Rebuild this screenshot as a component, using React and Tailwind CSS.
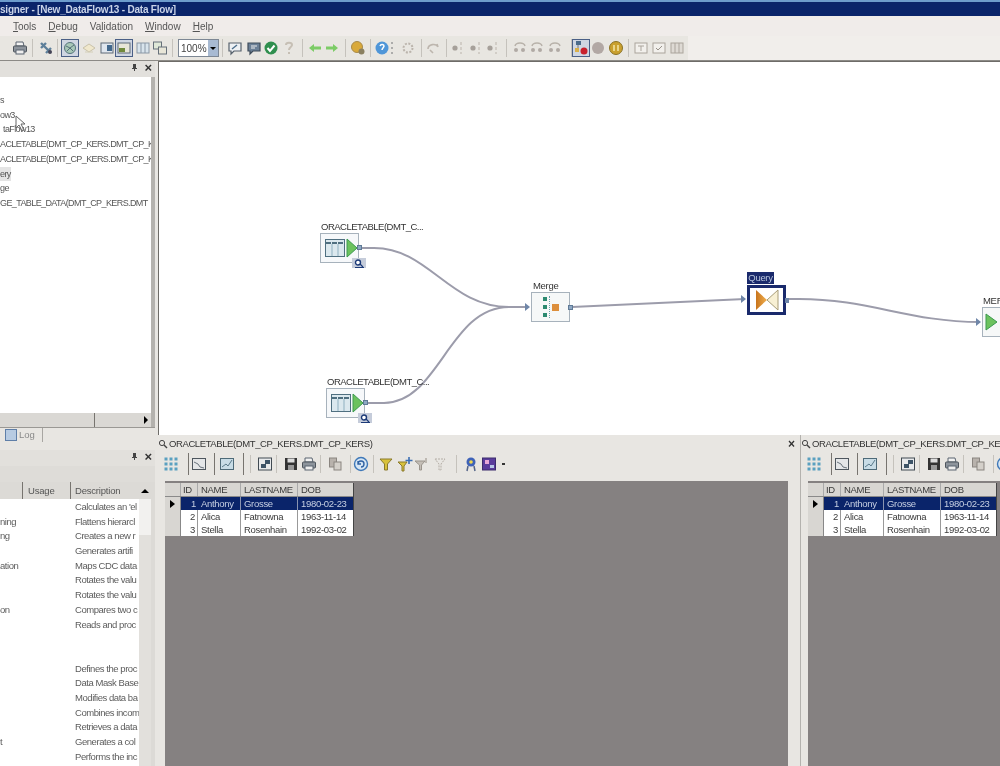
import React from "react";

// small toolbar glyphs, all on a 16x16 box
function Glyph({ kind }) {
  const s = { width: 16, height: 16, viewBox: "0 0 16 16" };
  if (kind === "print")
    return (
      <svg {...s}>
        <path d="M4 2h7l1 4H4z" fill="#f2f2f2" stroke="#5a6470" />
        <rect x="1.5" y="6" width="13" height="6" rx="1" fill="#8d949c" stroke="#4d545c" />
        <rect x="4" y="10" width="8" height="4" fill="#eee" stroke="#5a6470" />
      </svg>
    );
  if (kind === "tools")
    return (
      <svg {...s}>
        <path d="M3 3l9 9M3 8l5-5M8 13l5-5" stroke="#5d7f9a" strokeWidth="2.4" fill="none" />
        <circle cx="12" cy="12" r="2" fill="#445" />
      </svg>
    );
  if (kind === "globe")
    return (
      <svg {...s}>
        <circle cx="8" cy="8" r="5.5" fill="#a8c8b8" stroke="#56747c" />
        <path d="M4 6l4 2 4-3M5 11l3-3 3 3" stroke="#55707a" fill="none" />
      </svg>
    );
  if (kind === "cloud")
    return (
      <svg {...s}>
        <path d="M2 8l6-4 6 4-6 4z" fill="#f0e8cc" stroke="#c9c2aa" />
        <path d="M4 12h8" stroke="#d4cfb8" />
      </svg>
    );
  if (kind === "panelA")
    return (
      <svg {...s}>
        <rect x="2" y="3" width="12" height="10" fill="#dfe6ee" stroke="#5f6b78" />
        <rect x="8" y="5" width="5" height="6" fill="#42688c" />
      </svg>
    );
  if (kind === "panelB")
    return (
      <svg {...s}>
        <rect x="2" y="3" width="12" height="10" fill="#e8e6d8" stroke="#5f6b78" />
        <rect x="3" y="8" width="6" height="4" fill="#708a3c" />
      </svg>
    );
  if (kind === "panelC")
    return (
      <svg {...s}>
        <rect x="2" y="3" width="12" height="10" fill="#d8e4ec" stroke="#8a98a6" />
        <path d="M6 3v10M10 3v10" stroke="#8a98a6" />
      </svg>
    );
  if (kind === "panelD")
    return (
      <svg {...s}>
        <rect x="1.5" y="2" width="8" height="7" fill="#dfe8d8" stroke="#66707a" />
        <rect x="6.5" y="7" width="8" height="7" fill="#e8e6d8" stroke="#66707a" />
      </svg>
    );
  if (kind === "note")
    return (
      <svg {...s}>
        <path d="M2 3h12v8H7l-3 3v-3H2z" fill="#eef1f4" stroke="#56616c" strokeWidth="1.2" />
        <path d="M5 9l5-4" stroke="#4d6f8c" strokeWidth="1.5" />
      </svg>
    );
  if (kind === "note2")
    return (
      <svg {...s}>
        <path d="M2 3h12v8H7l-3 3v-3H2z" fill="#6b8096" stroke="#3f4c5a" strokeWidth="1.2" />
        <path d="M5 6h6M5 8h4" stroke="#eee" />
      </svg>
    );
  if (kind === "check")
    return (
      <svg {...s}>
        <circle cx="8" cy="8" r="6.5" fill="#2f8f4e" />
        <path d="M4.5 8l2.5 3 4.5-5.5" stroke="#fff" strokeWidth="2" fill="none" />
      </svg>
    );
  if (kind === "help")
    return (
      <svg {...s}>
        <path d="M5 5c0-3 6-3 6 0 0 2-3 2-3 5M8 12v2" stroke="#c6bfb4" strokeWidth="2" fill="none" />
      </svg>
    );
  if (kind === "left")
    return (
      <svg {...s}>
        <path d="M2 8l5-4v2.5h7v3H7V12z" fill="#7ccc66" />
      </svg>
    );
  if (kind === "right")
    return (
      <svg {...s}>
        <path d="M14 8L9 4v2.5H2v3h7V12z" fill="#7ccc66" />
      </svg>
    );
  if (kind === "coin")
    return (
      <svg {...s}>
        <circle cx="7" cy="7" r="5.5" fill="#d9a93a" stroke="#a88a4a" />
        <circle cx="11.5" cy="11.5" r="3" fill="#8a8060" />
      </svg>
    );
  if (kind === "about")
    return (
      <svg {...s}>
        <circle cx="8" cy="8" r="6.5" fill="#4f96d8" />
        <path d="M6 6c1-2.5 4-1.5 4 0S8 8 8 10" stroke="#fff" strokeWidth="1.5" fill="none" />
      </svg>
    );
  if (kind === "dots")
    return (
      <svg {...s}>
        <circle cx="4" cy="3" r="1" fill="#999" />
        <circle cx="4" cy="8" r="1" fill="#999" />
        <circle cx="4" cy="13" r="1" fill="#999" />
      </svg>
    );
  if (kind === "gear")
    return (
      <svg {...s}>
        <circle cx="8" cy="8" r="4.5" fill="none" stroke="#bbb4ac" strokeWidth="2" strokeDasharray="2 1.5" />
      </svg>
    );
  if (kind === "loop")
    return (
      <svg {...s}>
        <path d="M3 9c0-5 8-6 10-2M13 7l-1-3M8 13l-3-3" stroke="#bdb6ae" strokeWidth="1.6" fill="none" />
      </svg>
    );
  if (kind === "step")
    return (
      <svg {...s}>
        <circle cx="6" cy="8" r="2.6" fill="#a6a09a" />
        <path d="M12 2v3M12 7v3M12 12v2" stroke="#bbb4ac" />
      </svg>
    );
  if (kind === "cluster")
    return (
      <svg {...s}>
        <circle cx="4" cy="10" r="2" fill="#b0aaa4" />
        <circle cx="11" cy="10" r="2" fill="#b0aaa4" />
        <path d="M3 6c1-4 9-4 10 0" stroke="#b8b2aa" strokeWidth="1.5" fill="none" />
      </svg>
    );
  if (kind === "bug")
    return (
      <svg {...s}>
        <rect x="3" y="1" width="5" height="4" fill="#4a6a8a" />
        <path d="M5 5v5" stroke="#777" />
        <rect x="2" y="8" width="4" height="4" fill="#d9b04a" />
        <circle cx="11" cy="11" r="3.5" fill="#c8202c" />
      </svg>
    );
  if (kind === "disc")
    return (
      <svg {...s}>
        <circle cx="8" cy="8" r="6" fill="#b2a8a4" />
      </svg>
    );
  if (kind === "gold")
    return (
      <svg {...s}>
        <circle cx="8" cy="8" r="6.5" fill="#c9a02e" stroke="#8a7226" />
        <path d="M6 5v6M10 5v6" stroke="#f4e6a8" strokeWidth="1.5" />
      </svg>
    );
  if (kind === "box")
    return (
      <svg {...s}>
        <rect x="2" y="3" width="12" height="10" fill="#f2f0ec" stroke="#aaa49c" />
        <path d="M5 6h6M8 6v5" stroke="#aaa49c" />
      </svg>
    );
  if (kind === "box2")
    return (
      <svg {...s}>
        <rect x="2" y="3" width="12" height="10" fill="#f2f0ec" stroke="#aaa49c" />
        <path d="M5 8l2 2 4-4" stroke="#98928a" fill="none" />
      </svg>
    );
  if (kind === "box3")
    return (
      <svg {...s}>
        <rect x="2" y="3" width="12" height="10" fill="#dedad4" stroke="#aaa49c" />
        <path d="M6 3v10M10 3v10" stroke="#aaa49c" />
      </svg>
    );
  if (kind === "grid")
    return (
      <svg {...s}>
        {[3, 8, 13].map((x) =>
          [3, 8, 13].map((y) => <rect key={x + "-" + y} x={x - 1.5} y={y - 1.5} width="3" height="3" fill="#5aa0c0" />)
        )}
      </svg>
    );
  if (kind === "chart")
    return (
      <svg {...s}>
        <rect x="1.5" y="2.5" width="13" height="11" fill="#e4e6e8" stroke="#4e565e" />
        <path d="M3 6l4 2 2 3 4 1" stroke="#68727c" fill="none" />
      </svg>
    );
  if (kind === "chart2")
    return (
      <svg {...s}>
        <rect x="1.5" y="2.5" width="13" height="11" fill="#c8dce6" stroke="#4e6a78" />
        <path d="M3 11l4-3 2 2 4-6" stroke="#5a7a8a" fill="none" />
      </svg>
    );
  if (kind === "export")
    return (
      <svg {...s}>
        <rect x="1.5" y="2" width="13" height="12" fill="#e8eaec" stroke="#414a52" />
        <rect x="8" y="4" width="5" height="4" fill="#3d5468" />
        <rect x="4" y="8" width="5" height="4" fill="#3d5468" />
      </svg>
    );
  if (kind === "save")
    return (
      <svg {...s}>
        <rect x="2" y="2" width="12" height="12" fill="#333" />
        <rect x="4.5" y="2.5" width="7" height="4" fill="#ddd" />
        <rect x="5" y="9" width="6" height="5" fill="#999" />
      </svg>
    );
  if (kind === "copy")
    return (
      <svg {...s}>
        <rect x="2.5" y="2" width="7" height="9" fill="#b8b2ac" stroke="#8a8580" />
        <rect x="7" y="6" width="7" height="8" fill="#d4d0ca" stroke="#8a8580" />
      </svg>
    );
  if (kind === "refresh")
    return (
      <svg {...s}>
        <circle cx="8" cy="8" r="6.5" fill="#d6e6f4" stroke="#3f78b8" strokeWidth="1.4" />
        <path d="M5 8a3 3 0 1 1 3 3M5 5v3h3" stroke="#2f62a4" strokeWidth="1.4" fill="none" />
      </svg>
    );
  if (kind === "funnel")
    return (
      <svg {...s}>
        <path d="M2 3h12L9.5 8v6h-3V8z" fill="#d8c23c" stroke="#8a7a2c" />
      </svg>
    );
  if (kind === "funnelPlus")
    return (
      <svg {...s}>
        <path d="M1 6h9L7 10v5H5v-5z" fill="#d8c23c" stroke="#8a7a2c" />
        <path d="M12 1v7M8.5 4.5h7" stroke="#3b6fb4" strokeWidth="1.6" />
      </svg>
    );
  if (kind === "funnelOff")
    return (
      <svg {...s}>
        <path d="M1 5h10L7.5 9v5h-2V9z" fill="#c4beb6" stroke="#9a948c" />
        <path d="M12 2v5" stroke="#b0aaa2" strokeWidth="1.5" />
      </svg>
    );
  if (kind === "funnelDots")
    return (
      <svg {...s}>
        <path d="M3 3h10L9 8v6H7V8z" fill="none" stroke="#b4aea6" strokeDasharray="2 1" />
      </svg>
    );
  if (kind === "ribbon")
    return (
      <svg {...s}>
        <circle cx="8" cy="6" r="4.5" fill="#3e62b8" />
        <circle cx="8" cy="6" r="1.8" fill="#f0d850" />
        <path d="M5 10l-1 5M11 10l1 5" stroke="#546488" strokeWidth="1.5" />
      </svg>
    );
  if (kind === "purple")
    return (
      <svg {...s}>
        <rect x="1.5" y="2" width="13" height="12" fill="#5a3c9c" stroke="#3c2c6c" />
        <rect x="4" y="4" width="4" height="4" fill="#e8a8d8" />
        <rect x="9" y="9" width="4" height="3" fill="#b8c8e8" />
      </svg>
    );
  return null;
}

const mainTools = [
  ["print", 20], ["sep", 32], ["tools", 46], ["sep", 57], ["globe", 70, true], ["cloud", 89],
  ["panelA", 107], ["panelB", 124, true], ["panelC", 143], ["panelD", 160], ["sep", 172],
];
const mainTools2 = [
  ["sep", 222], ["note", 235], ["note2", 254], ["check", 271], ["help", 289], ["sep", 302], ["left", 315],
  ["right", 332], ["sep", 345], ["coin", 358], ["sep", 370], ["about", 382], ["dots", 396], ["gear", 408],
  ["sep", 421], ["loop", 433], ["sep", 446], ["step", 457], ["step", 475], ["step", 492], ["sep", 506],
  ["cluster", 520], ["cluster", 537], ["cluster", 555], ["sep", 571], ["bug", 581, true], ["disc", 598],
  ["gold", 616], ["sep", 628], ["box", 641], ["box2", 659], ["box3", 677],
];
const paneTools = [
  ["grid", 16], ["bar", 33], ["chart", 44], ["bar", 59], ["chart2", 72], ["bar", 88], ["sep", 95], ["export", 110],
  ["sep", 121], ["save", 136], ["print", 154], ["sep", 165], ["copy", 180], ["sep", 195], ["refresh", 206],
  ["sep", 218], ["funnel", 231], ["funnelPlus", 250], ["funnelOff", 267], ["funnelDots", 285], ["sep", 301],
  ["ribbon", 316], ["purple", 334],
];

// draws a run of tools; the gap before each tool comes from its centre position
function ToolRun({ items, start }) {
  let x = start;
  return items.map(([kind, centre, on], i) => {
    const isLine = kind === "sep" || kind === "bar";
    const w = on ? 18 : isLine ? 1 : 16;
    const gap = Math.round(centre - w / 2 - x);
    x += gap + w;
    if (isLine)
      return (
        <div
          key={i}
          className={kind === "bar" ? "h-[22px] w-px shrink-0 bg-[#77746f]" : "h-[18px] w-px shrink-0 bg-[#c5c2bc]"}
          style={{ marginLeft: gap }}
        />
      );
    return (
      <div
        key={i}
        className={
          on
            ? "flex h-[18px] w-[18px] shrink-0 items-center justify-center border border-[#4a5f86] bg-[#cfd6e2]"
            : "flex h-4 w-4 shrink-0 items-center justify-center"
        }
        style={{ marginLeft: gap }}
      >
        <Glyph kind={kind} />
      </div>
    );
  });
}

function Pin() {
  return (
    <svg width="9" height="9" viewBox="0 0 9 9">
      <path d="M3 1h3v4h1v1H5v2H4V6H2V5h1z" fill="#444" />
    </svg>
  );
}

function PanelHeader() {
  return (
    <div className="flex h-4 shrink-0 items-center justify-end gap-[5px] bg-[#e2e0dc] pr-[3px] pb-[3px]">
      <Pin />
      <span className="text-[13px] leading-none font-bold text-[#333]">×</span>
    </div>
  );
}

const treeRows = [
  "s",
  "ow3",
  "taFlow13",
  "ACLETABLE(DMT_CP_KERS.DMT_CP_K",
  "ACLETABLE(DMT_CP_KERS.DMT_CP_K",
  "ery",
  "ge",
  "GE_TABLE_DATA(DMT_CP_KERS.DMT",
];

const transforms = [
  ["", "Calculates an 'el"],
  ["ning", "Flattens hierarcl"],
  ["ng", "Creates a new r"],
  ["", "Generates artifi"],
  ["ation", "Maps CDC data"],
  ["", "Rotates the valu"],
  ["", "Rotates the valu"],
  ["on", "Compares two c"],
  ["", "Reads and proc"],
  ["", ""],
  ["", ""],
  ["", "Defines the proc"],
  ["", "Data Mask Base"],
  ["", "Modifies data ba"],
  ["", "Combines incom"],
  ["", "Retrieves a data"],
  ["t", "Generates a col"],
  ["", "Performs the inc"],
];

const people = [
  [1, "Anthony", "Grosse", "1980-02-23"],
  [2, "Alica", "Fatnowna", "1963-11-14"],
  [3, "Stella", "Rosenhain", "1992-03-02"],
];

function DataTable() {
  const cols = "grid grid-cols-[16px_17px_43px_57px_55px]";
  return (
    <div className="w-[189px] border-r border-b border-[#444] text-[9.5px] leading-[13px] tracking-[-0.3px] text-[#3a3a3a]">
      <div className={cols + " h-[13px] bg-[#d8d6d2]"}>
        <div className="border-r border-[#aaa]" />
        <div className="border-r border-[#aaa] pl-[2px]">ID</div>
        <div className="border-r border-[#aaa] pl-[3px]">NAME</div>
        <div className="border-r border-[#aaa] pl-[3px]">LASTNAME</div>
        <div className="pl-[3px]">DOB</div>
      </div>
      {people.map((p, i) => {
        const on = i === 0;
        return (
          <div key={p[0]} className={cols + " h-[13px] border-t border-[#8a8a8a]"}>
            <div className="flex items-center justify-center border-r border-[#888] bg-[#d8d6d2]">
              {on && <div className="h-0 w-0 border-y-[4px] border-l-[5px] border-y-transparent border-l-black" />}
            </div>
            <div className={on ? "bg-[#0a246a] pr-[2px] text-right text-[#c6cfe2]" : "border-r border-[#999] bg-white pr-[2px] text-right"}>{p[0]}</div>
            <div className={on ? "border-r border-[#8a94b0] bg-[#0a246a] pl-[3px] text-[#c6cfe2]" : "border-r border-[#999] bg-white pl-[3px]"}>{p[1]}</div>
            <div className={on ? "border-r border-[#8a94b0] bg-[#0a246a] pl-[3px] text-[#c6cfe2]" : "border-r border-[#999] bg-white pl-[3px]"}>{p[2]}</div>
            <div className={on ? "bg-[#0a246a] pl-[3px] text-[#c6cfe2]" : "bg-white pl-[3px]"}>{p[3]}</div>
          </div>
        );
      })}
    </div>
  );
}

function Magnifier() {
  return (
    <svg width="10" height="10" viewBox="0 0 10 10" className="shrink-0">
      <circle cx="4" cy="4" r="2.6" fill="none" stroke="#444" />
      <path d="M6 6l3 3" stroke="#444" strokeWidth="1.4" />
    </svg>
  );
}

function DataPane({ title, gridClass }) {
  return (
    <div className="flex h-full flex-col overflow-hidden bg-[#e8e6e2]">
      <div className="flex h-4 shrink-0 items-center gap-[1px] pt-[2px] text-[9.5px] leading-3 tracking-[-0.4px] whitespace-nowrap text-[#333]">
        <Magnifier />
        <span>{title}</span>
      </div>
      <div className="flex h-[30px] shrink-0 items-center overflow-hidden pb-[4px]">
        <ToolRun items={paneTools} start={3} />
        <div className="ml-[5px] h-[2px] w-[3px] bg-[#333]" />
      </div>
      <div className={"flex-1 bg-[#858181] pt-[2px] " + gridClass}>
        <DataTable />
      </div>
    </div>
  );
}

function SourceNode({ className, label }) {
  return (
    <div className={"absolute h-[30px] w-[39px] border border-[#a7b2bc] bg-[#f6f8fa] " + className}>
      <div className="absolute -top-[13px] left-0 text-[9.5px] leading-3 tracking-[-0.5px] whitespace-nowrap text-[#333]">{label}</div>
      <svg width="36" height="26" viewBox="0 0 36 26" className="mt-[2px] ml-[4px]">
        <rect x="0.5" y="3.5" width="19" height="17" fill="#dbe8ee" stroke="#4f6f80" />
        <path d="M1 7h18" stroke="#4f6f80" strokeWidth="2" strokeDasharray="5 1" />
        <path d="M7 8v12M13 8v12" stroke="#8fb0c0" />
        <path d="M22 3l10 9-10 9z" fill="#6cc25e" stroke="#3c9a50" />
      </svg>
      <div className="absolute top-[11px] -right-[4px] h-[5px] w-[5px] border border-[#5f7a96] bg-[#8ea8c4]" />
      <div className="absolute -right-[8px] -bottom-[6px] flex h-[10px] w-[14px] items-center justify-center bg-[#c5ccda]">
        <svg width="11" height="9" viewBox="0 0 11 9">
          <circle cx="4" cy="3.5" r="2.5" fill="#fff" stroke="#1c3a78" strokeWidth="1.4" />
          <path d="M6 5l3 3M1 8.5h9" stroke="#1c3a78" strokeWidth="1.2" />
        </svg>
      </div>
    </div>
  );
}

function Canvas() {
  return (
    <div className="relative h-[374px] shrink-0 overflow-hidden border-t border-l border-[#6e6c68] bg-white">
      <svg width="842" height="374" className="absolute top-0 left-0" fill="none" stroke="#9c9cab" strokeWidth="2">
        <path d="M202 186H215C270 186 290 245 350 245H369" />
        <path d="M209 341H225C280 341 290 245 350 245" />
        <path d="M413 245L586 237" />
        <path d="M628 237H640C710 237 750 260 821 260" />
        <path d="M366 241l5 4-5 4z" fill="#6f86a8" stroke="none" />
        <path d="M582 233l5 4-5 4z" fill="#6f86a8" stroke="none" />
        <path d="M817 256l5 4-5 4z" fill="#6f86a8" stroke="none" />
      </svg>

      <SourceNode className="top-[171px] left-[161px]" label="ORACLETABLE(DMT_C..." />
      <SourceNode className="top-[326px] left-[167px]" label="ORACLETABLE(DMT_C..." />

      <div className="absolute top-[230px] left-[372px] flex h-[30px] w-[39px] items-center justify-center gap-[2px] border border-[#a7b2bc] bg-[#f6f8f8]">
        <div className="absolute -top-[13px] left-[1px] text-[9.5px] leading-3 tracking-[-0.3px] text-[#333]">Merge</div>
        <div className="flex flex-col gap-[4px]">
          <div className="h-[4px] w-[4px] bg-[#2c8a70]" />
          <div className="h-[4px] w-[4px] bg-[#2c8a70]" />
          <div className="h-[4px] w-[4px] bg-[#2c8a70]" />
        </div>
        <div className="h-[22px] border-l border-dotted border-[#6aa0a8]" />
        <div className="h-[7px] w-[7px] bg-[#dd8f3c]" />
        <div className="absolute top-[12px] -right-[4px] h-[5px] w-[5px] border border-[#5f7a96] bg-[#8ea8c4]" />
      </div>

      <div className="absolute top-[223px] left-[588px] h-[30px] w-[39px] border-[3px] border-[#1a2a6c] bg-white">
        <div className="absolute -top-[16px] -left-[3px] h-[12px] w-[27px] bg-[#1a2a6c] text-center text-[9.5px] leading-3 tracking-[-0.3px] text-[#b8c4dc]">Query</div>
        <svg width="33" height="24" viewBox="0 0 33 24">
          <defs>
            <linearGradient id="queryFill" x1="0" x2="1" y1="0" y2="0">
              <stop offset="0" stopColor="#c8741c" />
              <stop offset="1" stopColor="#f0b050" />
            </linearGradient>
          </defs>
          <path d="M6 2l11 10L6 22z" fill="url(#queryFill)" />
          <path d="M28 2L17 12l11 10z" fill="#f8f0d4" stroke="#a89c78" />
        </svg>
        <div className="absolute top-[10px] -right-[6px] h-[5px] w-[4px] bg-[#6f86a8]" />
      </div>

      <div className="absolute top-[245px] left-[823px] h-[30px] w-[39px] border border-[#a7b2bc] bg-[#f6f8f8] pt-[5px] pl-[2px]">
        <div className="absolute -top-[13px] left-0 text-[9.5px] leading-3 tracking-[-0.3px] text-[#333]">MER</div>
        <svg width="14" height="18" viewBox="0 0 14 18">
          <path d="M1 1l11 8-11 8z" fill="#6cc25e" stroke="#3c9a50" />
        </svg>
      </div>
    </div>
  );
}

export default function App() {
  return (
    <div className="flex h-[766px] w-[1000px] flex-col overflow-hidden bg-[#e4e2de] font-['Liberation_Sans',Arial,sans-serif] text-[#444] blur-[0.35px]">
      <div className="h-4 shrink-0 border-t-2 border-t-[#6d9ccc] bg-[#0a246a] text-[10px] leading-[15px] font-bold tracking-[-0.2px] whitespace-nowrap text-[#c9d3e8]">
        signer - [New_DataFlow13 - Data Flow]
      </div>

      <div className="flex h-5 shrink-0 items-center bg-[#f0ecea] text-[10px] text-[#555]">
        <span className="ml-[13px]"><u>T</u>ools</span>
        <span className="ml-[12px]"><u>D</u>ebug</span>
        <span className="ml-[12px]">Va<u>l</u>idation</span>
        <span className="ml-[12px]"><u>W</u>indow</span>
        <span className="ml-[12px]"><u>H</u>elp</span>
      </div>

      <div className="flex h-6 shrink-0 items-center bg-[#f1eeeb]">
        <div className="flex h-6 w-[688px] shrink-0 items-center bg-[#e8e6e1]">
          <ToolRun items={mainTools} start={0} />
          <div className="ml-[5px] flex h-[18px] w-[41px] shrink-0 items-center border border-[#7d8794] bg-white text-[10px] text-[#444]">
            <span className="flex-1 pl-[2px]">100%</span>
            <span className="flex h-full w-[10px] items-center justify-center bg-[#a8bad2]">
              <span className="h-0 w-0 border-x-[3px] border-t-[3px] border-x-transparent border-t-black" />
            </span>
          </div>
          <ToolRun items={mainTools2} start={219} />
        </div>
      </div>

      <div className="flex min-h-0 flex-1 border-t border-[#8c8a86]">
        <div className="flex w-[158px] shrink-0 flex-col border-r-[3px] border-r-[#e8e6e2]">
          <PanelHeader />
          <div className="relative flex h-[336px] shrink-0 flex-col overflow-hidden border-r-[4px] border-r-[#b4b2ae] bg-white pt-[16px] text-[9px] leading-[14.7px] tracking-[-0.6px] whitespace-nowrap text-[#555]">
            {treeRows.map((row, i) => (
              <div key={i} className={i === 2 ? "pl-[3px]" : ""}>
                <span className={row === "ery" ? "inline-block w-[11px] bg-[#e4e4e4]" : ""}>{row}</span>
              </div>
            ))}
            <svg width="14" height="18" viewBox="0 0 14 18" className="absolute top-[38px] left-[14px]">
              <path d="M2 1v12l3-3 3 6 2-1-3-6h4z" fill="#fff" fillOpacity="0.6" stroke="#666" />
            </svg>
          </div>
          <div className="flex h-[14px] shrink-0 items-center justify-end border-r-[4px] border-r-[#b4b2ae] bg-[#dad8d4] pr-[3px]">
            <div className="h-[14px] w-[50px] border-l border-[#77746f]" />
            <span className="h-0 w-0 border-y-[4px] border-l-[4px] border-y-transparent border-l-black" />
          </div>
          <div className="flex h-[23px] shrink-0 items-start border-t border-[#9a9894] bg-[#e8e6e2]">
            <div className="ml-[5px] flex h-[14px] w-[38px] items-center gap-[2px] border-r border-[#a8a6a2] text-[9.5px] text-[#8a8a8a]">
              <div className="h-[12px] w-[12px] border border-[#5f7fa8] bg-[#b7cbe2]" />
              Log
            </div>
          </div>
          <PanelHeader />
          <div className="h-[16px] shrink-0 bg-[#dedcd8]" />
          <div className="flex h-[17px] shrink-0 items-stretch border-r-[4px] border-r-[#dcdad6] bg-[#dcdad6] text-[9.5px] leading-[17px] tracking-[-0.2px] text-[#555]">
            <div className="w-[23px] border-r border-[#77746f]" />
            <div className="w-[48px] border-r border-[#77746f] pl-[5px]">Usage</div>
            <div className="w-[68px] pl-[4px]">Description</div>
            <div className="flex w-[12px] items-center justify-center">
              <span className="h-0 w-0 border-x-[4px] border-b-[4px] border-x-transparent border-b-black" />
            </div>
          </div>
          <div className="flex min-h-0 flex-1 border-r-[4px] border-r-[#dcdad6]">
            <div className="w-[139px] shrink-0 overflow-hidden bg-white pt-[1px] text-[9.5px] leading-[14.7px] tracking-[-0.45px] whitespace-nowrap text-[#5c5c5c]">
              {transforms.map((t, i) => (
                <div key={i} className="flex h-[14.7px]">
                  <div className="w-[75px] shrink-0">{t[0]}</div>
                  <div>{t[1]}</div>
                </div>
              ))}
            </div>
            <div className="flex w-[12px] flex-col bg-[#e2e0dc]">
              <div className="h-[36px] bg-[#f2f1ef]" />
            </div>
          </div>
        </div>

        <div className="flex min-w-0 flex-1 flex-col">
          <Canvas />
          <div className="flex min-h-0 flex-1">
            <div className="relative w-[642px] shrink-0">
              <DataPane title="ORACLETABLE(DMT_CP_KERS.DMT_CP_KERS)" gridClass="mr-[12px] ml-[7px]" />
              <div className="absolute top-[3px] right-[5px] text-[12px] leading-3 font-bold text-[#333]">×</div>
            </div>
            <div className="min-w-0 flex-1 border-l border-[#b4b2ae]">
              <DataPane title="ORACLETABLE(DMT_CP_KERS.DMT_CP_KE" gridClass="ml-[7px]" />
            </div>
          </div>
        </div>
      </div>
    </div>
  );
}
